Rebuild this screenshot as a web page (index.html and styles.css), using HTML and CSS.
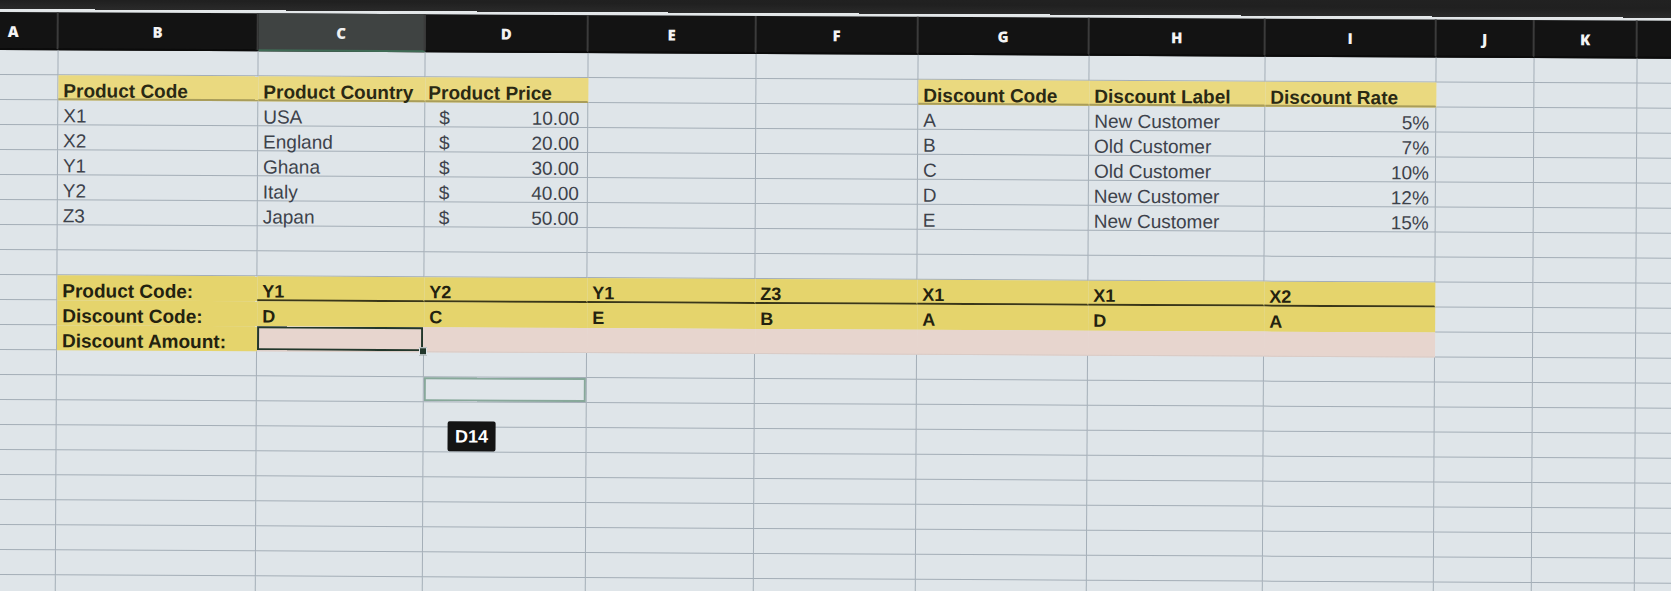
FILE: index.html
```html
<!DOCTYPE html>
<html lang="en">
<head>
<meta charset="utf-8">
<title>Discount sheet</title>
<link rel="stylesheet" href="styles.css">
</head>
<body>
<div class="sheet">
  <div class="topbar"></div>
  <div class="row head">
    <span class="first">A</span><span>B</span><span class="sel">C</span><span>D</span><span>E</span><span>F</span><span>G</span><span>H</span><span>I</span><span>J</span><span>K</span><span></span>
  </div>
  <!-- row 1 -->
  <div class="row"><span></span><span></span><span></span><span></span><span></span><span></span><span></span><span></span><span></span><span></span><span></span><span></span></div>
  <!-- row 2 -->
  <div class="row">
    <span></span>
    <span class="th">Product Code</span><span class="th">Product Country</span><span class="th tight">Product Price</span>
    <span></span><span></span>
    <span class="th">Discount Code</span><span class="th">Discount Label</span><span class="th">Discount Rate</span>
    <span></span><span></span><span></span>
  </div>
  <!-- rows 3-7 -->
  <div class="row"><span></span><span>X1</span><span>USA</span><span class="money"><b>$</b>10.00</span><span></span><span></span><span>A</span><span>New Customer</span><span class="num">5%</span><span></span><span></span><span></span></div>
  <div class="row"><span></span><span>X2</span><span>England</span><span class="money"><b>$</b>20.00</span><span></span><span></span><span>B</span><span>Old Customer</span><span class="num">7%</span><span></span><span></span><span></span></div>
  <div class="row"><span></span><span>Y1</span><span>Ghana</span><span class="money"><b>$</b>30.00</span><span></span><span></span><span>C</span><span>Old Customer</span><span class="num">10%</span><span></span><span></span><span></span></div>
  <div class="row"><span></span><span>Y2</span><span>Italy</span><span class="money"><b>$</b>40.00</span><span></span><span></span><span>D</span><span>New Customer</span><span class="num">12%</span><span></span><span></span><span></span></div>
  <div class="row"><span></span><span>Z3</span><span>Japan</span><span class="money"><b>$</b>50.00</span><span></span><span></span><span>E</span><span>New Customer</span><span class="num">15%</span><span></span><span></span><span></span></div>
  <!-- rows 8-9 -->
  <div class="row"><span></span><span></span><span></span><span></span><span></span><span></span><span></span><span></span><span></span><span></span><span></span><span></span></div>
  <div class="row"><span></span><span></span><span></span><span></span><span></span><span></span><span></span><span></span><span></span><span></span><span></span><span></span></div>
  <!-- row 10 -->
  <div class="row">
    <span></span>
    <span class="lbl">Product Code:</span>
    <span class="val ul">Y1</span><span class="val ul">Y2</span><span class="val ul">Y1</span><span class="val ul">Z3</span><span class="val ul">X1</span><span class="val ul">X1</span><span class="val ul">X2</span>
    <span></span><span></span><span></span>
  </div>
  <!-- row 11 -->
  <div class="row">
    <span></span>
    <span class="lbl">Discount Code:</span>
    <span class="val">D</span><span class="val">C</span><span class="val">E</span><span class="val">B</span><span class="val">A</span><span class="val">D</span><span class="val">A</span>
    <span></span><span></span><span></span>
  </div>
  <!-- row 12 -->
  <div class="row">
    <span></span>
    <span class="lbl">Discount Amount:</span>
    <span class="pink active"></span><span class="pink"></span><span class="pink"></span><span class="pink"></span><span class="pink"></span><span class="pink"></span><span class="pink"></span>
    <span></span><span></span><span></span>
  </div>
  <!-- row 13 -->
  <div class="row"><span></span><span></span><span></span><span></span><span></span><span></span><span></span><span></span><span></span><span></span><span></span><span></span></div>
  <!-- row 14 -->
  <div class="row"><span></span><span></span><span></span><span class="target"></span><span></span><span></span><span></span><span></span><span></span><span></span><span></span><span></span></div>
  <!-- row 15 -->
  <div class="row"><span></span><span></span><span></span><span class="anchor"><em class="tip">D14</em></span><span></span><span></span><span></span><span></span><span></span><span></span><span></span><span></span></div>
  <!-- rows 16-23 -->
  <div class="row"><span></span><span></span><span></span><span></span><span></span><span></span><span></span><span></span><span></span><span></span><span></span><span></span></div>
  <div class="row"><span></span><span></span><span></span><span></span><span></span><span></span><span></span><span></span><span></span><span></span><span></span><span></span></div>
  <div class="row"><span></span><span></span><span></span><span></span><span></span><span></span><span></span><span></span><span></span><span></span><span></span><span></span></div>
  <div class="row"><span></span><span></span><span></span><span></span><span></span><span></span><span></span><span></span><span></span><span></span><span></span><span></span></div>
  <div class="row"><span></span><span></span><span></span><span></span><span></span><span></span><span></span><span></span><span></span><span></span><span></span><span></span></div>
  <div class="row"><span></span><span></span><span></span><span></span><span></span><span></span><span></span><span></span><span></span><span></span><span></span><span></span></div>
  <div class="row"><span></span><span></span><span></span><span></span><span></span><span></span><span></span><span></span><span></span><span></span><span></span><span></span></div>
  <div class="row"><span></span><span></span><span></span><span></span><span></span><span></span><span></span><span></span><span></span><span></span><span></span><span></span></div>
  <div class="row"><span></span><span></span><span></span><span></span><span></span><span></span><span></span><span></span><span></span><span></span><span></span><span></span></div>
</div>
</body>
</html>
```

FILE: styles.css
```css
html, body {
  margin: 0;
  padding: 0;
  height: 100%;
  overflow: hidden;
  background: #1c1c1c;
}

.sheet {
  --cols: 59px 200px 167px 163px 168px 162px 171px 176px 171px 98px 103px 1fr;
  width: 1730px;
  background: #dfe5e9;
  transform: rotate(0.3deg);
  transform-origin: 0 0;
  font-family: "Liberation Sans", Arial, sans-serif;
}

.topbar {
  height: 42px;
  margin-top: -30px;
  background: linear-gradient(#262626 0, #202020 30px, #2a2a2a 39px, #e6eaec 39px, #dfe3e5 42px);
}

.row {
  display: grid;
  grid-template-columns: var(--cols);
  height: 25px;
}

.row > * {
  box-sizing: border-box;
  height: 25px;
  border-right: 1px solid #a4aeb7;
  border-bottom: 1px solid #a4aeb7;
  padding: 3px 5px 0;
  font-size: 19px;
  line-height: 25px;
  color: #3d424b;
  white-space: nowrap;
  font-style: normal;
}

/* column header bar */
.row.head {
  height: 38px;
  background: #131313;
}
.row.head > * {
  height: 38px;
  padding: 0;
  border-right: 2px solid #3b3b3b;
  border-bottom: 2px solid #0b0b0b;
  color: #f4f4f4;
  font-family: "Open Sans", "Liberation Sans", sans-serif;
  font-weight: 800;
  font-size: 15px;
  line-height: 38px;
  text-align: center;
}
.row.head > .first {
  text-align: left;
  padding-left: 8px;
}
.row.head > .sel {
  background: #3f4342;
  color: #f0f0f0;
  border-bottom: 2px solid #3f6b55;
}

/* yellow table headers */
.th {
  background: #ead97f;
  color: #2a2914;
  font-weight: bold;
  border-right-color: transparent !important;
  border-bottom: 2px solid #a99d5a !important;
}
.th.tight {
  padding-left: 3px;
}

.money {
  display: flex;
  justify-content: space-between;
  padding-left: 14px !important;
  padding-right: 8px !important;
}
.money b {
  font-weight: normal;
}

.num {
  text-align: right;
  padding-right: 6px !important;
}

/* lower block */
.lbl {
  background: #e5d46c;
  color: #23220f;
  font-weight: bold;
  border-right-color: transparent !important;
  border-bottom-color: transparent !important;
}
.val {
  background: #e5d46c;
  color: #23220f;
  font-weight: bold;
  font-size: 18px !important;
  border-right-color: transparent !important;
  border-bottom-color: transparent !important;
}
.val.ul {
  border-bottom: 2px solid #3a3719 !important;
}
.pink {
  background: #e7d5ce;
  border-right-color: transparent !important;
  border-bottom-color: #d9cbc6 !important;
}
.pink.active {
  position: relative;
  box-shadow: inset 0 0 0 2px #22372b;
}
.pink.active::after {
  content: "";
  position: absolute;
  right: -4px;
  bottom: -4px;
  width: 6px;
  height: 6px;
  background: #22372b;
  border: 1px solid #dfe5e9;
}

.target {
  box-shadow: inset 0 0 0 2px #87a89a;
}

.anchor {
  position: relative;
}
.tip {
  position: absolute;
  left: 24px;
  top: 19px;
  width: 48px;
  height: 30px;
  background: #141414;
  color: #ffffff;
  font-style: normal;
  font-weight: bold;
  font-size: 18px;
  line-height: 30px;
  text-align: center;
  border-radius: 2px;
}
```
